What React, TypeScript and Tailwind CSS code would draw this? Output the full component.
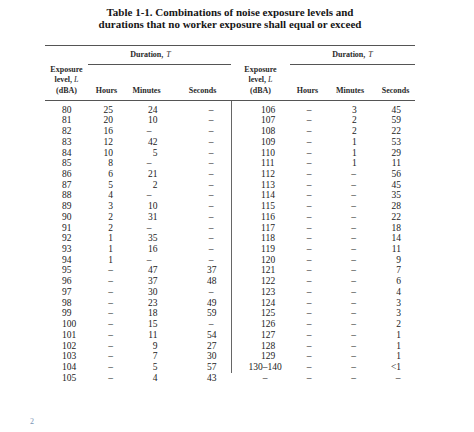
type Row = [string, string, string, string];

const leftRows: Row[] = [
  ["80", "25", "24", "–"],
  ["81", "20", "10", "–"],
  ["82", "16", "–", "–"],
  ["83", "12", "42", "–"],
  ["84", "10", "5", "–"],
  ["85", "8", "–", "–"],
  ["86", "6", "21", "–"],
  ["87", "5", "2", "–"],
  ["88", "4", "–", "–"],
  ["89", "3", "10", "–"],
  ["90", "2", "31", "–"],
  ["91", "2", "–", "–"],
  ["92", "1", "35", "–"],
  ["93", "1", "16", "–"],
  ["94", "1", "–", "–"],
  ["95", "–", "47", "37"],
  ["96", "–", "37", "48"],
  ["97", "–", "30", "–"],
  ["98", "–", "23", "49"],
  ["99", "–", "18", "59"],
  ["100", "–", "15", "–"],
  ["101", "–", "11", "54"],
  ["102", "–", "9", "27"],
  ["103", "–", "7", "30"],
  ["104", "–", "5", "57"],
  ["105", "–", "4", "43"],
];

const rightRows: Row[] = [
  ["106", "–", "3", "45"],
  ["107", "–", "2", "59"],
  ["108", "–", "2", "22"],
  ["109", "–", "1", "53"],
  ["110", "–", "1", "29"],
  ["111", "–", "1", "11"],
  ["112", "–", "–", "56"],
  ["113", "–", "–", "45"],
  ["114", "–", "–", "35"],
  ["115", "–", "–", "28"],
  ["116", "–", "–", "22"],
  ["117", "–", "–", "18"],
  ["118", "–", "–", "14"],
  ["119", "–", "–", "11"],
  ["120", "–", "–", "9"],
  ["121", "–", "–", "7"],
  ["122", "–", "–", "6"],
  ["123", "–", "–", "4"],
  ["124", "–", "–", "3"],
  ["125", "–", "–", "3"],
  ["126", "–", "–", "2"],
  ["127", "–", "–", "1"],
  ["128", "–", "–", "1"],
  ["129", "–", "–", "1"],
  ["130–140", "–", "–", "<1"],
];

const isDash = (v: string) => v === "–";

function LeftRow({ row }: { row: Row }) {
  const [l, h, m, s] = row;
  return (
    <div className="grid grid-cols-[43px_37px_43px_63px] leading-[10.72px]">
      <div className="pl-[17px]">{l}</div>
      <div className="text-right pr-[12px]">{h}</div>
      <div className={isDash(m) ? "text-right pr-[16.5px]" : "text-right pr-[10.5px]"}>{m}</div>
      <div className={isDash(s) ? "text-right pr-[17.5px]" : "text-right pr-[14.5px]"}>{s}</div>
    </div>
  );
}

function RightRow({ row }: { row: Row }) {
  const [l, h, m, s] = row;
  const special = l.length > 3 || isDash(l);
  return (
    <div className="grid grid-cols-[58px_35px_47px_43px] leading-[10.72px]">
      <div className={special ? "text-center pl-[8px]" : "pl-[29px]"}>{l}</div>
      <div className="text-right pr-[13.5px]">{h}</div>
      <div className={isDash(m) ? "text-right pr-[16px]" : "text-right pr-[15.3px]"}>{m}</div>
      <div className={isDash(s) ? "text-right pr-[14.5px]" : "text-right pr-[14px]"}>{s}</div>
    </div>
  );
}

function Duration({ className }: { className: string }) {
  return (
    <div className={`flex items-center justify-center border-b border-[#555] ${className}`}>
      Duration, <span className="italic font-normal ml-[3px]">T</span>
    </div>
  );
}

export default function App() {
  return (
    <div className="w-[474px] h-[432px] bg-white overflow-hidden font-['Liberation_Serif',serif] text-[#222]">
      <h1 className="pt-[5.5px] text-center font-bold text-[11px] leading-[12.3px] text-[#161616] pr-[14px]">
        Table 1-1. Combinations of noise exposure levels and
        <br />
        durations that no worker exposure shall equal or exceed
      </h1>

      <div className="ml-[45px] mt-[15px] w-[370px]">
        {/* header */}
        <div className="border-t border-b border-[#555] font-bold text-[8px] leading-[10.2px] text-[#2a2a2a]">
          <div className="grid grid-cols-[43px_37px_43px_63px_59px_35px_47px_43px] h-[19px]">
            <div />
            <Duration className="col-span-3 pr-[18px]" />
            <div />
            <Duration className="col-span-3" />
          </div>
          <div className="grid grid-cols-[43px_37px_43px_63px_59px_35px_47px_43px] h-[35px] items-end pb-[5px] text-center">
            <div>
              Exposure
              <br />
              level, <span className="italic font-normal">L</span>
              <br />
              (dBA)
            </div>
            <div>Hours</div>
            <div>Minutes</div>
            <div className="pl-[6px]">Seconds</div>
            <div>
              Exposure
              <br />
              level, <span className="italic font-normal">L</span>
              <br />
              (dBA)
            </div>
            <div>Hours</div>
            <div className="pl-[3px]">Minutes</div>
            <div className="pl-[4px]">Seconds</div>
          </div>
        </div>

        {/* body */}
        <div className="flex text-[9.5px]">
          <div className="w-[186px] pt-[3.6px]">
            {leftRows.map((r) => (
              <LeftRow key={r[0]} row={r} />
            ))}
          </div>
          <div className="w-[184px]">
            <div className="border-l border-[#666] pt-[3.6px]">
              {rightRows.map((r) => (
                <RightRow key={r[0]} row={r} />
              ))}
            </div>
            <div className="border-l border-transparent">
              <RightRow row={["–", "–", "–", "–"]} />
            </div>
          </div>
        </div>
      </div>

      <div className="pl-[30px] mt-[34px] text-[8px] leading-[10px] text-[#7b93b5]">2</div>
    </div>
  );
}
